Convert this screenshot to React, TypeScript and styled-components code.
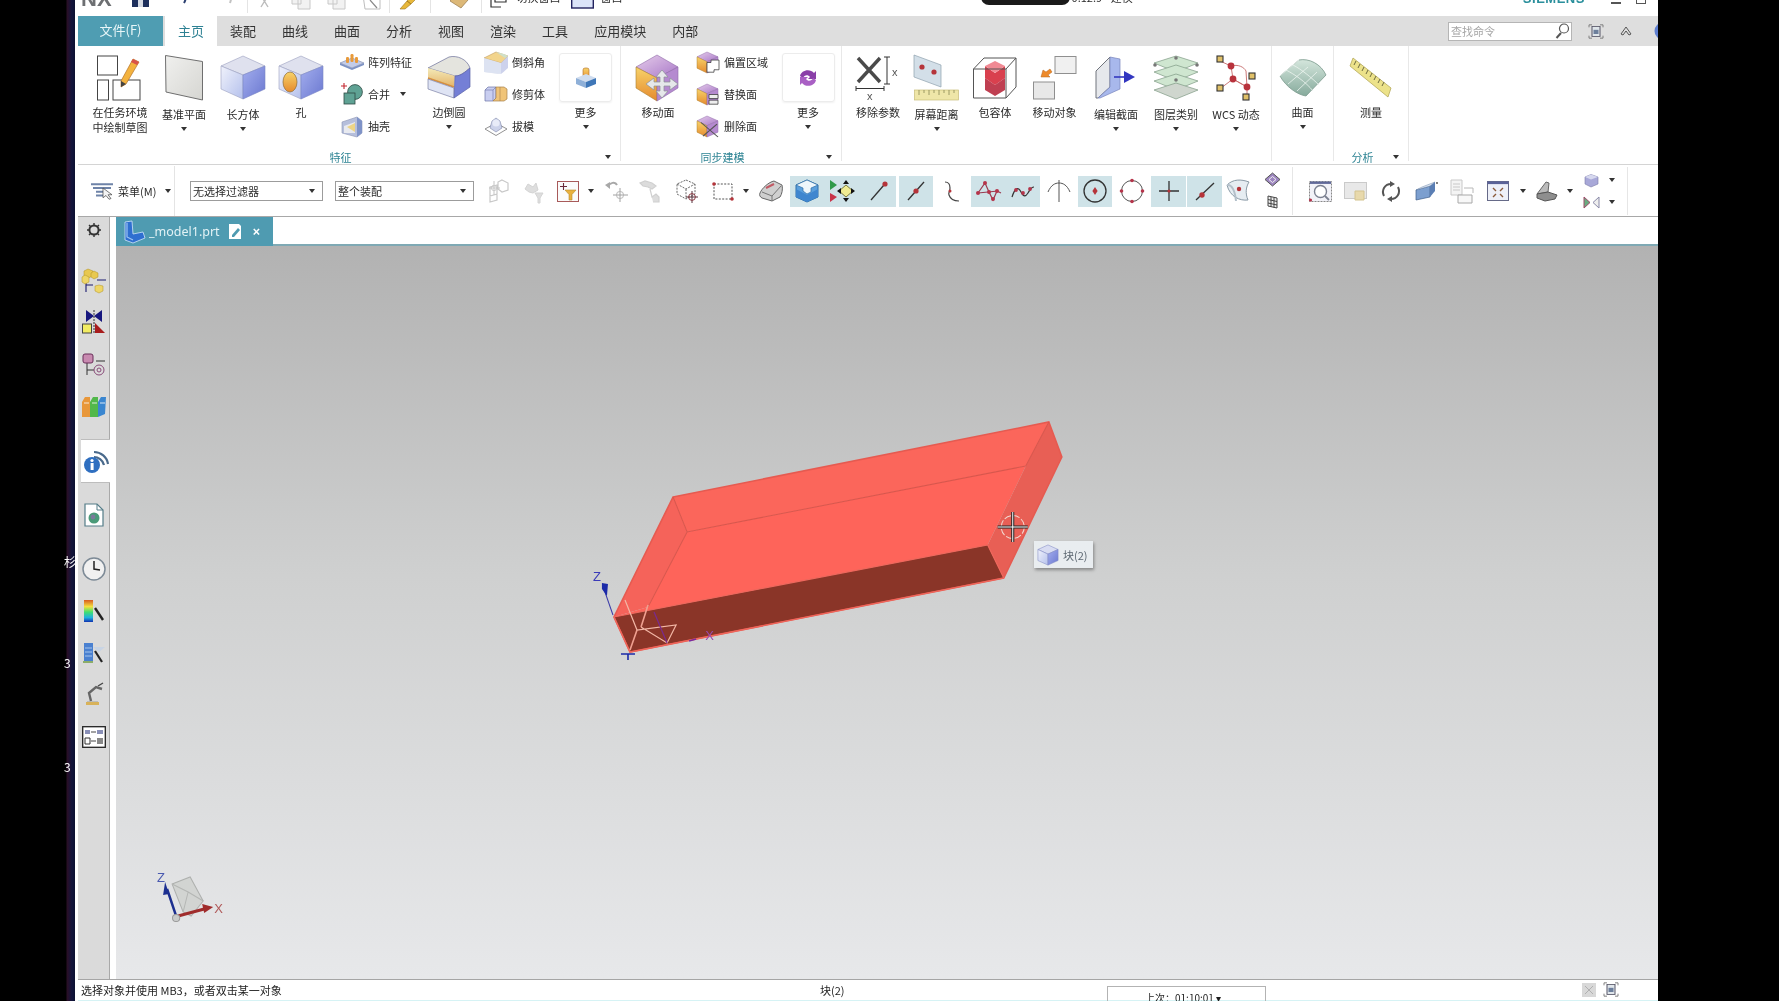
import React from "react";
import styled, { createGlobalStyle } from "styled-components";

const GlobalStyle = createGlobalStyle`
  html, body { margin: 0; padding: 0; background: #000; }
  body { font-family: "Noto Sans CJK SC", "Noto Sans", sans-serif; overflow: hidden; }
`;

const Page = styled.div`
  width: 1779px;
  height: 1001px;
  display: flex;
  background: #000;
  overflow: hidden;
  filter: blur(0.35px);
`;

const Gutter = styled.div`
  width: 75px;
  flex-shrink: 0;
  background: linear-gradient(90deg, #000 0, #000 66px, #2a0f26 67px, #12143c 72px, #0c1030 75px);
  display: flex;
  flex-direction: column;
  align-items: flex-end;
  color: #fff;
  font-size: 12px;
  line-height: 16px;
`;

const GutterMark = styled.span<{ $mt: number }>`
  margin-top: ${(p) => p.$mt}px;
  width: 11px;
  text-align: left;
`;

const Frame = styled.div`
  width: 1583px;
  flex-shrink: 0;
  box-sizing: border-box;
  padding-left: 3px;
  background: #fff;
  display: flex;
  flex-direction: column;
  overflow: hidden;
  color: #2b2b2b;
`;

const TitleBar = styled.div`
  height: 16px;
  flex-shrink: 0;
  display: flex;
  align-items: flex-end;
  overflow: hidden;
`;

const TitleItem = styled.div<{ $ml: number; $bottom?: number }>`
  margin-left: ${(p) => p.$ml}px;
  margin-bottom: ${(p) => p.$bottom ?? 0}px;
  flex-shrink: 0;
  display: flex;
  font-size: 11px;
  line-height: 15px;
  white-space: nowrap;
`;

const TitleDivider = styled.div<{ $ml: number }>`
  margin-left: ${(p) => p.$ml}px;
  width: 1px;
  height: 13px;
  margin-bottom: 3px;
  flex-shrink: 0;
  background: #e4e4e4;
`;

const NxMark = styled(TitleItem)`
  font-family: "Liberation Sans", sans-serif;
  font-weight: 700;
  font-size: 22px;
  line-height: 22px;
  color: #6d6f72;
`;

const TitlePill = styled.div`
  width: 89px;
  height: 14px;
  flex-shrink: 0;
  background: #1a1a1a;
  border-radius: 0 0 8px 8px;
`;

const Siemens = styled(TitleItem)`
  font-family: "Liberation Sans", sans-serif;
  font-weight: 700;
  font-size: 13px;
  letter-spacing: 0.5px;
  color: #2a8f9c;
`;

const WinBtn = styled.div<{ $ml: number; $kind: "min" | "max" }>`
  margin-left: ${(p) => p.$ml}px;
  margin-bottom: 12px;
  width: 10px;
  flex-shrink: 0;
  box-sizing: border-box;
  height: ${(p) => (p.$kind === "min" ? 2 : 10)}px;
  background: ${(p) => (p.$kind === "min" ? "#555" : "transparent")};
  border: ${(p) => (p.$kind === "max" ? "1px solid #555" : "none")};
`;

const TabRow = styled.div`
  height: 30px;
  flex-shrink: 0;
  display: flex;
  align-items: stretch;
  background: #dedede;
  font-size: 13px;
`;

const FileTab = styled.div`
  width: 85px;
  margin-right: 2px;
  padding-bottom: 3px;
  box-sizing: border-box;
  background: #4f9db2;
  color: #e8f6f8;
  display: flex;
  align-items: center;
  justify-content: center;
`;

const RibbonTab = styled.div<{ $active?: boolean }>`
  padding: 0 13px 1px;
  display: flex;
  align-items: center;
  background: ${(p) => (p.$active ? "#fff" : "transparent")};
  color: ${(p) => (p.$active ? "#2f8294" : "#333")};
  white-space: nowrap;
`;

const RowEnd = styled.div`
  margin-left: auto;
  display: flex;
  align-items: center;
  margin-right: -14px;
`;

const Spacer = styled.div<{ $w: number }>`
  width: ${(p) => p.$w}px;
  flex-shrink: 0;
`;

const SearchBox = styled.div`
  width: 124px;
  height: 19px;
  box-sizing: border-box;
  border: 1px solid #b5b5b5;
  background: #fff;
  display: flex;
  align-items: center;
  justify-content: space-between;
  padding: 0 2px;
  font-size: 11px;
  color: #a5a5a5;
`;

const Ribbon = styled.div`
  height: 119px;
  flex-shrink: 0;
  box-sizing: border-box;
  border-bottom: 1px solid #d4d4d4;
  display: flex;
  background: #fff;
`;

const RibbonGroup = styled.div<{ $w: number; $pad?: number }>`
  width: ${(p) => p.$w}px;
  box-sizing: border-box;
  padding-left: ${(p) => p.$pad ?? 0}px;
  border-right: 1px solid #e8e8e8;
  display: flex;
  flex-direction: column;
  margin-bottom: 3px;
`;

const GroupBody = styled.div`
  height: 104px;
  flex-shrink: 0;
  display: flex;
`;

const GroupFooter = styled.div<{ $pad: number }>`
  height: 14px;
  flex-shrink: 0;
  margin-left: ${(p) => -p.$pad}px;
  display: flex;
  align-items: center;
  padding-right: 7px;
  font-size: 11px;
  color: #2e8494;
`;

const FooterLabel = styled.span`
  flex: 1;
  text-align: center;
`;

const Arrow = styled.span`
  display: inline-block;
  flex-shrink: 0;
  width: 0;
  height: 0;
  border-left: 3px solid transparent;
  border-right: 3px solid transparent;
  border-top: 4px solid #333;
`;

const FooterArrow = styled(Arrow)`
  margin: 0 2px;
`;

const Command = styled.div<{ $w: number }>`
  width: ${(p) => p.$w}px;
  flex-shrink: 0;
  display: flex;
  flex-direction: column;
  align-items: center;
  padding-top: 4px;
  font-size: 11px;
  line-height: 15px;
`;

const CommandIcon = styled.div<{ $low?: boolean }>`
  height: ${(p) => (p.$low ? 57 : 55)}px;
  padding-bottom: ${(p) => (p.$low ? 2 : 0)}px;
  box-sizing: border-box;
  display: flex;
  align-items: center;
  justify-content: center;
`;

const CommandLabel = styled.div`
  text-align: center;
  white-space: nowrap;
  height: 15px;
`;

const CommandArrow = styled(Arrow)`
  margin-top: 5px;
`;

const MoreCard = styled.div`
  width: 53px;
  height: 49px;
  box-sizing: border-box;
  border: 1px solid #ececec;
  border-radius: 3px;
  box-shadow: 0 1px 2px rgba(0, 0, 0, 0.06);
  display: flex;
  align-items: center;
  justify-content: center;
`;

const SideColumn = styled.div<{ $w: number; $pad: number }>`
  width: ${(p) => p.$w}px;
  flex-shrink: 0;
  box-sizing: border-box;
  padding-left: ${(p) => p.$pad}px;
  display: flex;
  flex-direction: column;
  font-size: 11px;
`;

const SideRow = styled.div`
  height: 32px;
  display: flex;
  align-items: center;
  gap: 4px;
  white-space: nowrap;
`;

const SideIcon = styled.div`
  width: 24px;
  flex-shrink: 0;
  display: flex;
  justify-content: center;
`;

const SideArrow = styled(Arrow)`
  margin-left: 6px;
`;

const Toolbar = styled.div`
  height: 52px;
  flex-shrink: 0;
  box-sizing: border-box;
  padding-top: 1px;
  border-bottom: 1px solid #a8a8a8;
  display: flex;
  align-items: center;
  font-size: 11px;
`;

const MenuButton = styled.div`
  width: 97px;
  height: 100%;
  flex-shrink: 0;
  box-sizing: border-box;
  padding-left: 13px;
  border-right: 1px solid #e4e4e4;
  display: flex;
  align-items: center;
  gap: 3px;
`;

const FilterSelect = styled.div<{ $w: number; $ml: number }>`
  width: ${(p) => p.$w}px;
  margin-left: ${(p) => p.$ml}px;
  height: 20px;
  flex-shrink: 0;
  box-sizing: border-box;
  border: 1px solid #9c9c9c;
  display: flex;
  align-items: center;
  justify-content: space-between;
  padding: 0 7px 0 2px;
  white-space: nowrap;
`;

const Tool = styled.div<{ $w: number; $on?: boolean; $gap?: number }>`
  width: ${(p) => p.$w}px;
  height: 31px;
  flex-shrink: 0;
  display: flex;
  flex-direction: column;
  align-items: center;
  justify-content: center;
  gap: ${(p) => p.$gap ?? 9}px;
  background: ${(p) => (p.$on ? "#cfe3e8" : "transparent")};
`;

const ToolDivider = styled.div`
  width: 1px;
  height: 48px;
  margin: 0 1px 0 2px;
  flex-shrink: 0;
  background: #e6e6e6;
`;

const Main = styled.div`
  flex: 1;
  min-height: 0;
  display: flex;
`;

const Sidebar = styled.div`
  width: 32px;
  flex-shrink: 0;
  box-sizing: border-box;
  border-right: 1px solid #a9a9a9;
  background: #dadada;
  display: flex;
  flex-direction: column;
`;

const SideSlot = styled.div<{ $mt?: number; $h?: number; $active?: boolean }>`
  height: ${(p) => p.$h ?? 36}px;
  margin-top: ${(p) => p.$mt ?? 0}px;
  margin-left: ${(p) => (p.$active ? 3 : 0)}px;
  margin-right: ${(p) => (p.$active ? -1 : 0)}px;
  flex-shrink: 0;
  box-sizing: border-box;
  display: flex;
  align-items: center;
  justify-content: center;
  background: ${(p) => (p.$active ? "#fff" : "transparent")};
  border-top: ${(p) => (p.$active ? "1px solid #bdbdbd" : "none")};
  border-bottom: ${(p) => (p.$active ? "1px solid #bdbdbd" : "none")};
`;

const WorkArea = styled.div`
  flex: 1;
  margin-left: 6px;
  min-width: 0;
  display: flex;
  flex-direction: column;
`;

const DocStrip = styled.div`
  height: 29px;
  flex-shrink: 0;
  box-sizing: border-box;
  border-bottom: 2px solid #7fa9b4;
  display: flex;
  background: #fff;
`;

const DocTab = styled.div`
  width: 157px;
  height: 29px;
  flex-shrink: 0;
  box-sizing: border-box;
  padding-left: 6px;
  background: #4f9bb1;
  color: #e2f2f5;
  display: flex;
  align-items: center;
  font-family: "Noto Sans", sans-serif;
  font-size: 12.5px;
`;

const DocName = styled.span`
  margin: 0 8px 0 3px;
`;

const DocClose = styled.span`
  margin-left: 11px;
  font-weight: 700;
  font-family: "Liberation Sans", sans-serif;
  color: #fff;
`;

const Viewport = styled.div`
  position: relative;
  flex: 1;
  min-height: 0;
  background: linear-gradient(180deg, #b2b2b2 0%, #cfd0d0 45%, #e7e8ea 100%);
  overflow: hidden;
`;

const Scene = styled.svg`
  position: absolute;
  inset: 0;
  width: 100%;
  height: 100%;
`;

const SnapTip = styled.div`
  position: absolute;
  left: 918px;
  top: 295px;
  width: 59px;
  height: 27px;
  box-sizing: border-box;
  background: #e9edf0;
  box-shadow: 1px 2px 3px rgba(0, 0, 0, 0.35);
  display: flex;
  align-items: center;
  gap: 4px;
  padding-left: 3px;
  font-size: 11px;
  color: #5b6670;
`;

const StatusBar = styled.div`
  height: 22px;
  flex-shrink: 0;
  box-sizing: border-box;
  border-top: 1px solid #a5a5a5;
  border-bottom: 1px solid #d6f3f5;
  padding: 0 39px 0 3px;
  display: flex;
  align-items: center;
  font-size: 11px;
  color: #1d1d1d;
`;

const StatusPrompt = styled.div`
  width: 739px;
  flex-shrink: 0;
  white-space: nowrap;
`;

const StatusObject = styled.div`
  width: 287px;
  flex-shrink: 0;
`;

const StatusClock = styled.div`
  width: 159px;
  height: 15px;
  margin-top: 6px;
  box-sizing: border-box;
  border: 1px solid #b3b3b3;
  border-bottom: none;
  flex-shrink: 0;
  padding: 5px 0 0 37px;
  overflow: hidden;
  line-height: 12px;
  font-size: 10px;
  white-space: nowrap;
`;

const StatusIcons = styled.div`
  margin-left: auto;
  display: flex;
  gap: 6px;
`;

const IconSvg = styled.svg`
  display: block;
  flex-shrink: 0;
  overflow: visible;
`;

const HiddenDefs = styled.svg`
  position: absolute;
  width: 0;
  height: 0;
`;

// rh squeezes a drawing to a rendered height other than its own box
type IP = { w: number; h: number; rh?: number; children: React.ReactNode };
const I = ({ w, h, rh, children }: IP) => (
  <IconSvg width={w} height={rh ?? h} viewBox={`0 0 ${w} ${h}`} preserveAspectRatio="none">
    {children}
  </IconSvg>
);

const Defs = () => (
  <HiddenDefs>
    <defs>
      <linearGradient id="cl" x1="0" y1="0" x2="1" y2="1">
        <stop offset="0" stopColor="#f0f2fb" />
        <stop offset="1" stopColor="#b4c0ec" />
      </linearGradient>
      <linearGradient id="cr" x1="0" y1="0" x2="1" y2="1">
        <stop offset="0" stopColor="#a3aeee" />
        <stop offset="1" stopColor="#6b78d0" />
      </linearGradient>
      <linearGradient id="org" x1="0" y1="0" x2="0" y2="1">
        <stop offset="0" stopColor="#f7d36a" />
        <stop offset="1" stopColor="#e58a2e" />
      </linearGradient>
      <linearGradient id="band" x1="0" y1="0" x2="0" y2="1">
        <stop offset="0" stopColor="#f4eab8" />
        <stop offset="1" stopColor="#e4b46a" />
      </linearGradient>
      <linearGradient id="pur" x1="0" y1="0" x2="1" y2="1">
        <stop offset="0" stopColor="#e6cdea" />
        <stop offset="1" stopColor="#a878c8" />
      </linearGradient>
      <linearGradient id="rain" x1="0" y1="0" x2="0" y2="1">
        <stop offset="0" stopColor="#d85a20" />
        <stop offset="0.3" stopColor="#f5e040" />
        <stop offset="0.55" stopColor="#40e070" />
        <stop offset="0.8" stopColor="#20b0e0" />
        <stop offset="1" stopColor="#1030b0" />
      </linearGradient>
      <linearGradient id="dat" x1="0" y1="0" x2="1" y2="1">
        <stop offset="0" stopColor="#f0f0ee" />
        <stop offset="1" stopColor="#d6d6d2" />
      </linearGradient>
      <linearGradient id="sf" x1="0" y1="0" x2="0" y2="1">
        <stop offset="0" stopColor="#d4e6dc" />
        <stop offset="1" stopColor="#86aa9c" />
      </linearGradient>
    </defs>
  </HiddenDefs>
);

const Sketch = () => (
  <I w={46} h={46}>
    <g fill="#fff" stroke="#444" strokeWidth="1">
      <rect x="0.5" y="1" width="20" height="19" />
      <rect x="0.5" y="25" width="11" height="20" />
      <rect x="16" y="25" width="27" height="20" />
    </g>
    <path d="M36 4l6 3-13 22-5 3 0-6z" fill="#f3b23e" stroke="#b5722a" strokeWidth="0.7" />
    <path d="M36 4l6 3-2 3-6-3z" fill="#d8534a" />
    <path d="M24 32l0-6 5 3z" fill="#444" />
  </I>
);
const Datum = () => (
  <I w={38} h={46}>
    <path d="M0.5 0.5L37.5 6.5V45L1 37z" fill="url(#dat)" stroke="#6f6f6f" />
  </I>
);
const BlockBig = ({ hole }: { hole?: boolean }) => (
  <I w={44} h={43}>
    <path d="M22 0l22 10-22 9L0 10z" fill="#dfe1ee" stroke="#9aa0c0" strokeWidth="0.6" />
    <path d="M0 10l22 9v24L0 33z" fill="url(#cl)" stroke="#9aa0c0" strokeWidth="0.6" />
    <path d="M44 10L22 19v24l22-10z" fill="url(#cr)" stroke="#7b86c4" strokeWidth="0.6" />
    {hole && <ellipse cx="11" cy="26" rx="7" ry="10" fill="url(#org)" stroke="#8c6a33" strokeWidth="0.7" />}
  </I>
);
const Blend = () => (
  <I w={44} h={43}>
    <path d="M1 12L22 1C30-1 40 3 43 12 38 16 34 20 28 20Z" fill="#e4e4de" stroke="#6a6f98" strokeWidth="0.7" />
    <path d="M1 12l27 8-1 11-26-9z" fill="url(#band)" />
    <path d="M1 22l26 9" stroke="#d8903e" strokeWidth="1.6" />
    <path d="M1 23l26 9v10L1 33z" fill="#dfe4f4" stroke="#6a6f98" strokeWidth="0.6" />
    <path d="M28 20c6 0 10-4 15-8v19L27 42z" fill="#747fd6" stroke="#5a62a8" strokeWidth="0.7" />
  </I>
);
const PatternI = () => (
  <I w={24} h={16}>
    <path d="M0 9l12-5 12 5-12 5z" fill="#c3cce8" stroke="#7d88a8" strokeWidth="0.6" />
    <path d="M0 9v2l12 5 12-5V9l-12 5z" fill="#7e93c4" />
    <g fill="#e89a3a">
      <rect x="6" y="3" width="3" height="6" rx="1.2" />
      <rect x="10.5" y="0" width="3" height="8" rx="1.2" />
      <rect x="15" y="3" width="3" height="6" rx="1.2" />
    </g>
  </I>
);
const Unite = () => (
  <I w={22} h={22}>
    <path d="M0 3h6M3 0v6" stroke="#c3262f" strokeWidth="1.1" />
    <circle cx="14" cy="9" r="7.4" fill="#5fa294" stroke="#2f4a44" strokeWidth="0.8" />
    <rect x="3" y="10" width="11" height="11" fill="#5fa294" stroke="#2f4a44" strokeWidth="0.8" />
  </I>
);
const Shell = () => (
  <I w={22} h={21}>
    <path d="M1 6l15-5 5 4v12l-5 4L1 17z" fill="#b6bfdc" stroke="#8c94b4" strokeWidth="0.6" />
    <path d="M3 10l11-4v11l-11 0z" fill="#e8eaf0" />
    <path d="M6 11l8-4v9z" fill="#edd486" />
    <path d="M16 1l5 4v12l-5 4z" fill="#7f93c8" />
  </I>
);
const Chamfer = () => (
  <I w={24} h={24}>
    <path d="M0 8l12-6 12 4-4 16-6 2-14-2z" fill="#e6e8f2" />
    <path d="M0 8l12-6 12 4-7 7z" fill="#f2d48c" stroke="#c8a060" strokeWidth="0.6" />
    <path d="M17 13l7-7v12l-7 6z" fill="#cdd2ec" />
    <path d="M0 8l17 5v11L0 22z" fill="#dde3f2" />
    <path d="M12 2l8 2 4 2-3 2z" fill="#cfe0c8" />
  </I>
);
const Trim = () => (
  <I w={24} h={16}>
    <path d="M1 4l3-3h8v11l-3 3H1z" fill="#c9cef0" stroke="#6c74a8" strokeWidth="0.7" />
    <path d="M1 4h8v11M9 4l3-3" fill="none" stroke="#6c74a8" strokeWidth="0.6" />
    <path d="M12 1h8l3 2v10l-3 2h-8l-3 0 3-3z" fill="#f0c478" stroke="#a8824a" strokeWidth="0.7" />
    <path d="M16 1v14" stroke="#a8824a" strokeWidth="0.6" />
  </I>
);
const Draft = () => (
  <I w={22} h={19}>
    <path d="M0 12L11 6l11 6-11 6.5z" fill="#fff" stroke="#777" strokeWidth="0.8" />
    <path d="M5 11l2-7 4-3 4 3 2 7-6 4z" fill="#ccd2ea" stroke="#7e86a8" strokeWidth="0.6" />
    <circle cx="11" cy="6" r="3.6" fill="#e8ebf8" />
  </I>
);
const MoreFeature = () => (
  <I w={22} h={20}>
    <rect x="8" y="0" width="6" height="11" rx="2" fill="url(#org)" stroke="#b06a22" strokeWidth="0.6" />
    <path d="M1 10l10-4 10 4-10 4z" fill="#cfdcee" />
    <path d="M1 10v6l10 4v-6z" fill="#8fb0d8" />
    <path d="M21 10v6l-10 4v-6z" fill="#3f77b8" />
  </I>
);
const MoveFace = () => (
  <I w={46} h={46}>
    <path d="M22 0l21 12-21 11L1 12z" fill="url(#pur)" stroke="#8f6aa8" strokeWidth="0.6" />
    <path d="M1 12l21 11v23L1 33z" fill="url(#org)" stroke="#a88030" strokeWidth="0.6" />
    <path d="M43 12L22 23v23l21-13z" fill="#b58ad0" stroke="#8f6aa8" strokeWidth="0.6" />
    <path d="M27 15l6 7h-4v5h6v-4l8 6-8 6v-4h-6v5h4l-6 7-6-7h4v-5h-6v4l-8-6 8-6v4h6v-5h-4z" fill="#e6e8ea" stroke="#8a8f96" strokeWidth="0.7" />
  </I>
);
const FaceSmall = ({ kind }: { kind: "offset" | "replace" | "del" }) => (
  <I w={22} h={26} rh={21}>
    <path d="M10 0l11 6-11 6L0 6z" fill="url(#pur)" stroke="#8f6aa8" strokeWidth="0.5" />
    <path d="M0 6l10 6v14L0 20z" fill="url(#org)" stroke="#a88030" strokeWidth="0.5" />
    <path d="M21 6l-11 6v14l11-6z" fill="#b58ad0" stroke="#8f6aa8" strokeWidth="0.5" />
    {kind === "offset" && <path d="M10 13h4v-3h8v12h-5v3h-7z" fill="#fff" stroke="#333" strokeWidth="0.8" />}
    {kind === "replace" && <path d="M12 13h9v5h-9zM12 20h9v5h-9z" fill="#eee" stroke="#333" strokeWidth="0.8" />}
    {kind === "del" && <path d="M4 8l17 18M20 10L6 25" stroke="#555" strokeWidth="1.2" />}
  </I>
);
const SyncMore = () => (
  <I w={22} h={22}>
    <path d="M3 9c1-6 10-8 14-3l2-2v8h-8l2-2c-2-3-6-2-7 1z" fill="#8a3fa8" />
    <path d="M19 13c-1 6-10 8-14 3l-2 2v-8h8l-2 2c2 3 6 2 7-1z" fill="#a960c4" />
  </I>
);
const RemoveParam = () => (
  <I w={44} h={44}>
    <path d="M2 2l22 24M24 2L2 26" stroke="#4a4a4a" strokeWidth="3.4" />
    <path d="M28 1h6M31 1v27M28 28h6M0 30v5M0 32.5h28M28 30v5" stroke="#333" strokeWidth="1" fill="none" />
    <text x="36" y="20" fontFamily="Liberation Sans" fontSize="11" fill="#555">x</text>
    <text x="11" y="44" fontFamily="Liberation Sans" fontSize="11" fill="#555">x</text>
  </I>
);
const ScreenDist = () => (
  <I w={45} h={46}>
    <path d="M0 0l27 10v22L0 22z" fill="#d3dfe8" stroke="#8ea0ae" strokeWidth="0.7" />
    <circle cx="8" cy="12" r="2.6" fill="#b5343a" />
    <circle cx="20" cy="17" r="2.6" fill="#b5343a" />
    <rect x="0.5" y="35" width="44" height="10" fill="#efe6a8" stroke="#c8bd78" strokeWidth="0.7" />
    <path d="M5 35v5M10 35v3M15 35v5M20 35v3M25 35v5M30 35v3M35 35v5M40 35v3" stroke="#7d7848" strokeWidth="0.7" />
  </I>
);
const Envelope = () => (
  <I w={44} h={42}>
    <path d="M12 9L22 16l0 12-10-7zM22 16l10-7v12l-10 7z" fill="#d9404e" />
    <path d="M12 9l10-5 10 5-10 7z" fill="#f08a94" />
    <path d="M12 21l10 7 10-7V33l-10 6-10-6z" fill="#b82a3e" opacity="0.9" />
    <path d="M0.5 12L11 1h32v29L33 41H0.5zM0.5 12H33v29M33 12L43 1" fill="none" stroke="#555" strokeWidth="1" />
  </I>
);
const MoveObject = () => (
  <I w={44} h={44}>
    <rect x="22" y="0.5" width="21" height="17" fill="#f0f0f0" stroke="#8f8f8f" />
    <rect x="0.5" y="26" width="21" height="17" fill="#e8e8e8" stroke="#8f8f8f" />
    <path d="M8 21l2-7 3 2 4-3 2 3-4 3 2 2z" fill="#ee8a2a" stroke="#b5651a" strokeWidth="0.5" />
  </I>
);
const EditSection = () => (
  <I w={40} h={42}>
    <path d="M0 14L14 0v30L2 41H0z" fill="#e6e8ec" stroke="#70747c" />
    <path d="M14 0l10 2v30L4 41 2 41 14 30z" fill="#a8b8ec" stroke="#7884bc" strokeWidth="0.7" />
    <path d="M18 20h12" stroke="#3337c0" strokeWidth="1.6" />
    <path d="M28 14l11 6-11 6z" fill="#3337c0" />
  </I>
);
const LayerI = () => (
  <I w={46} h={44}>
    {[0, 9, 18, 27].map((d) => (
      <path key={d} d={`M23 ${d}l22 7-22 9L1 ${d + 7}z`} fill={d === 27 ? "#cfd6ce" : "#cfe6d0"} stroke="#7e9a84" strokeWidth="0.7" />
    ))}
    <g fill="#777">
      <circle cx="23" cy="2" r="1.8" />
      <circle cx="44" cy="9" r="1.8" />
      <circle cx="2" cy="9" r="1.8" />
      <circle cx="23" cy="24" r="1.8" />
    </g>
  </I>
);
const Wcs = () => (
  <I w={40} h={46}>
    <path d="M4 6L15 11 17 24 31 32 30 16C28 12 22 9 15 11M5 33l12-9M17 24l14 8M31 32l0 9" fill="none" stroke="#c56a6a" strokeWidth="0.9" />
    <g fill="#b8323c">
      <circle cx="15" cy="11" r="3.4" />
      <circle cx="17" cy="24" r="3.4" />
      <circle cx="31" cy="32" r="3.4" />
    </g>
    <g fill="#e0c068" stroke="#333" strokeWidth="1.1">
      <rect x="1" y="1" width="6" height="6" />
      <rect x="33" y="18" width="6" height="6" />
      <rect x="1" y="30" width="6" height="6" />
      <rect x="27" y="39" width="6" height="6" />
    </g>
  </I>
);
const SurfaceI = () => (
  <I w={46} h={38}>
    <path d="M0 17L19 1c10-2 22 4 27 15L26 37C18 36 6 28 0 17z" fill="url(#sf)" stroke="#7c9a8e" strokeWidth="0.8" />
    <path d="M6 11c8 4 20 12 27 21M13 6c8 4 19 13 26 20M0 17L19 1M8 25L28 8M17 32L37 13" fill="none" stroke="#eef5f0" strokeWidth="0.8" />
  </I>
);
const MeasureI = () => (
  <I w={42} h={40}>
    <path d="M3 0L41 30l-3 9L0 8z" fill="#ece28a" stroke="#b5a95c" strokeWidth="0.8" />
    <path d="M6 3l-2 4M10 6l-2 4M14 9l-2 4M18 12l-2 4M22 15l-2 4M26 18l-2 4M30 21l-2 4M34 24l-2 4" stroke="#6d6a40" strokeWidth="1" />
  </I>
);

const MagnifierI = () => (
  <I w={14} h={16}>
    <circle cx="9" cy="5.5" r="4.5" fill="#fff" stroke="#555" strokeWidth="1.2" />
    <path d="M6 10L1.5 15" stroke="#555" strokeWidth="2" />
  </I>
);
const FitFrame = () => (
  <I w={16} h={18} rh={15}>
    <path d="M1 4V1h3M12 1h3v3M15 14v3h-3M4 17H1v-3" fill="none" stroke="#777" />
    <rect x="4" y="3" width="8" height="12" fill="#dfe5ea" stroke="#556" />
    <rect x="5.5" y="7" width="5" height="5" fill="#6c7f9c" />
  </I>
);
const ChevronUp = () => (
  <I w={14} h={12}>
    <path d="M2 9l5-7 5 7-2 1-3-4-3 4z" fill="none" stroke="#555" />
  </I>
);
const HelpI = () => (
  <I w={18} h={18}>
    <circle cx="9" cy="9" r="8.5" fill="#5f7fd0" />
    <text x="5.5" y="13" fontSize="12" fill="#fff" fontFamily="Liberation Sans">?</text>
  </I>
);
const MenuI = () => (
  <I w={24} h={24} rh={18}>
    <path d="M0 3h22M2 8h18M5 13h9M5 18h7" stroke="#6e83a8" strokeWidth="2.6" />
    <path d="M12 8l0 13 3-3 3 5 2-1-3-5h4z" fill="#f4f4f4" stroke="#444" strokeWidth="0.8" />
  </I>
);

/* ---- toolbar glyphs ---- */
const SnapGhost = () => (
  <I w={24} h={26}>
    <path d="M3 9l7-2v9l-7 2zM3 18v6l7-2v-6M15 2l6 3v7l-6 2-4-3V4z" fill="none" stroke="#c8c8c8" strokeWidth="1.2" />
    <path d="M7 3v14M2 10h11" stroke="#c4c4c4" />
    <circle cx="7" cy="10" r="2.6" fill="none" stroke="#cbcbcb" />
  </I>
);
const Ghost2 = () => (
  <I w={22} h={24}>
    <path d="M2 10l3-5 5 3 3-4 2 7-5 3-4-1zM12 14h8l-3 5v5h-2v-5z" fill="#dedede" stroke="#d4d4d4" />
  </I>
);
const FilterI = () => (
  <I w={22} h={21}>
    <rect x="0.5" y="0.5" width="21" height="20" fill="#fbfbfb" stroke="#a85a5a" />
    <path d="M3 5.5h7M6.5 2v7" stroke="#6a2a3a" strokeWidth="1.1" />
    <path d="M8 9h11l-4 4.5V19h-3v-5.5z" fill="#e9b13e" stroke="#b88a2e" strokeWidth="0.6" />
  </I>
);
const ArrowCross = () => (
  <I w={23} h={22}>
    <path d="M3 6c2-3 7-5 9-1" fill="none" stroke="#a8a8a8" strokeWidth="2" />
    <path d="M0 5l5-3 0 7z" fill="#a8a8a8" />
    <path d="M15 8v14M8 15h15" stroke="#a0a0a0" />
    <circle cx="15" cy="15" r="3.6" fill="none" stroke="#b8b8b8" />
  </I>
);
const Ghost3 = () => (
  <I w={23} h={24}>
    <path d="M1 4l5-2 7 2 4 3-4 3-4-2-5-1zM11 10l2 8 4-3 3 3v5h-6" fill="#dcdcdc" stroke="#d0d0d0" strokeWidth="1.2" />
  </I>
);
const BoxCross = () => (
  <I w={24} h={24}>
    <path d="M10 1l9 4v10l-9 5-9-5V5zM1 5l9 5 9-5M10 10v10" fill="none" stroke="#6a6a6a" strokeDasharray="2 1.2" />
    <path d="M16 12v12M10 18h12" stroke="#55303a" />
    <circle cx="16" cy="18" r="3.4" fill="none" stroke="#8a3a44" />
  </I>
);
const RectSel = () => (
  <I w={22} h={19}>
    <path d="M2 2h18v15H2z" fill="none" stroke="#555" strokeDasharray="2 1.4" />
    <circle cx="2" cy="2" r="1.8" fill="#b5343a" />
    <circle cx="20" cy="17" r="1.8" fill="#b5343a" />
  </I>
);
const Block3 = () => (
  <I w={24} h={22}>
    <path d="M1 13C3 8 10 2 15 1l8 4c1 4 0 9-2 12l-8 4-10-3c-2-1-3-3-2-5z" fill="#cfcfcf" stroke="#666" />
    <path d="M3 12l10 4 9-10M13 16v5" fill="none" stroke="#777" />
    <path d="M7 8l8-4" stroke="#c25a64" strokeWidth="2" />
  </I>
);
const BlueCube = () => (
  <I w={23} h={22}>
    <path d="M11 0l11 5v12l-11 5L0 17V5z" fill="#5b9fdc" stroke="#2f6fa8" />
    <path d="M0 5l11-5 11 5-7 3v4l-4 2-4-3V8z" fill="#eef6fb" stroke="#2f6fa8" strokeWidth="0.7" />
    <path d="M0 9l11 6 11-6v8l-11 5L0 17z" fill="#3f86cf" />
  </I>
);
const MoveArrows = () => (
  <I w={26} h={24}>
    <path d="M16 6l7 6-7 6-7-6z" fill="#f0ec92" stroke="#7b7b3e" />
    <path d="M16 1l3 4h-6zM16 23l3-4h-6zM25 12l-4 3V9zM7 12l4 3V9z" fill="#111" />
    <path d="M0 1l7 5-7 5z" fill="#2f9a4a" />
    <path d="M0 14l7 4-7 5z" fill="#c8344a" />
  </I>
);
const EndLine = () => (
  <I w={20} h={20}>
    <path d="M2 19L15 4" stroke="#333" strokeWidth="1.3" />
    <circle cx="16" cy="3" r="2.6" fill="#b5343a" />
  </I>
);
const MidLine = () => (
  <I w={20} h={20}>
    <path d="M2 19L18 1" stroke="#333" strokeWidth="1.3" />
    <circle cx="10" cy="10" r="2.6" fill="#b5343a" />
  </I>
);
const CurveI = () => (
  <I w={20} h={21}>
    <path d="M3 1c3 0 5 2 5 6s-2 4-1 7 4 6 10 6" fill="none" stroke="#444" strokeWidth="1.2" />
    <circle cx="8" cy="10" r="1.5" fill="#b5343a" />
  </I>
);
const PolyPts = () => (
  <I w={26} h={20}>
    <path d="M2 12L9 2l4 9 4 8 4-9 4 2M2 12l20-2" fill="none" stroke="#9a3a50" strokeWidth="1.2" />
    <g fill="#b5344a">
      <circle cx="9" cy="2" r="2" />
      <circle cx="2" cy="12" r="2" />
      <circle cx="13" cy="11" r="2" />
      <circle cx="17" cy="18" r="2" />
      <circle cx="21" cy="10" r="2" />
    </g>
  </I>
);
const Spline = () => (
  <I w={24} h={13}>
    <path d="M1 12C4 3 7 1 10 7s5 4 7 1 3-6 6-6" fill="none" stroke="#333" strokeWidth="1.2" />
    <g fill="#b5344a">
      <circle cx="5" cy="5" r="1.9" />
      <circle cx="12" cy="8" r="1.9" />
      <circle cx="19" cy="4" r="1.9" />
    </g>
  </I>
);
const ArcCross = () => (
  <I w={24} h={22}>
    <path d="M1 12C4 5 8 3 12 3s8 2 11 9M12 0v22" fill="none" stroke="#555" />
  </I>
);
const CircleDot = () => (
  <I w={24} h={24}>
    <circle cx="12" cy="12" r="11" fill="none" stroke="#333" strokeWidth="1.3" />
    <path d="M12 8l2.6 4-2.6 4-2.6-4z" fill="#b5343a" />
  </I>
);
const CircleRing = () => (
  <I w={24} h={24}>
    <circle cx="12" cy="12" r="10.5" fill="none" stroke="#555" />
    <g fill="#b5344a">
      <circle cx="12" cy="1.5" r="1.8" />
      <circle cx="12" cy="22.5" r="1.8" />
      <circle cx="1.5" cy="12" r="1.8" />
      <circle cx="22.5" cy="12" r="1.8" />
    </g>
  </I>
);
const Cross = () => (
  <I w={20} h={20}>
    <path d="M10 0v20M0 10h20" stroke="#333" strokeWidth="1.3" />
    <circle cx="10" cy="10" r="1.6" fill="#b5343a" />
  </I>
);
const SlashPt = () => (
  <I w={20} h={19}>
    <path d="M1 18L19 1" stroke="#333" strokeWidth="1.3" />
    <circle cx="7" cy="13" r="2.7" fill="#b5343a" />
  </I>
);
const FacePt = () => (
  <I w={24} h={22}>
    <path d="M1 5C7-1 15-1 23 2c-3 5-4 11-1 18-8 1-18-3-21-15z" fill="#e6edf2" stroke="#8a9aa6" />
    <path d="M1 5c5-1 8 6 9 16" fill="none" stroke="#b4c0ca" strokeWidth="2" />
    <circle cx="13" cy="9" r="2.2" fill="#b5343a" />
  </I>
);
const Diamond = () => (
  <I w={15} h={13}>
    <path d="M7.5 0L15 6.5 7.5 13 0 6.5z" fill="#9d86c0" stroke="#555" />
    <path d="M4 6.5l3.5-3 3.5 3-3.5 3z" fill="none" stroke="#eee" />
  </I>
);
const GridI = () => (
  <I w={11} h={14}>
    <path d="M1 1l9 2v10l-9-2zM1 4.5l9 2M1 8l9 2M4 2v10M7 2.5v10" fill="#eee" stroke="#444" />
  </I>
);
const ZoomFrame = () => (
  <I w={23} h={21}>
    <rect x="0.5" y="0.5" width="22" height="20" fill="#f2f2f8" stroke="#888" strokeDasharray="2 1" />
    <rect x="1" y="0.5" width="21" height="2.4" fill="#5f6898" />
    <circle cx="11.5" cy="10.5" r="6" fill="#fff" stroke="#7b8090" strokeWidth="1.4" />
    <path d="M16 15l4 4" stroke="#7b8090" strokeWidth="1.8" />
    <circle cx="1.5" cy="19" r="1.6" fill="#b5344a" />
  </I>
);
const PasteGhost = () => (
  <I w={23} h={19}>
    <rect x="0.5" y="0.5" width="22" height="16" fill="#e8e8e8" stroke="#cacaca" />
    <path d="M11 9h9v9h-9z" fill="#e8d9ac" stroke="#d4c490" />
  </I>
);
const Rotate = () => (
  <I w={22} h={21}>
    <path d="M4 15C1 9 5 3 11 3M18 6c3 6-1 12-7 12" fill="none" stroke="#555" strokeWidth="2" />
    <path d="M10 0l5 3-5 3zM12 21l-5-3 5-3z" fill="#555" />
  </I>
);
const Wedge = () => (
  <I w={22} h={18}>
    <path d="M0 8l14-4v11L0 18z" fill="#7c9fcf" stroke="#3f5f8a" strokeWidth="0.7" />
    <path d="M0 8l14-4 5-4-13 5z" fill="#dfe7f2" stroke="#6a84a8" strokeWidth="0.5" />
    <path d="M14 4l5-4v9l-5 6z" fill="#5a7eb4" />
    <circle cx="21" cy="1" r="0.9" fill="#444" />
  </I>
);
const DocsGhost = () => (
  <I w={25} h={23}>
    <path d="M1 0h11v15H1zM3 4h7M3 7h7M3 10h7" fill="#f4f4f4" stroke="#c8c8c8" />
    <path d="M8 15h14v8H8z" fill="#f8f8f8" stroke="#a8a8a8" />
    <path d="M14 8h9v5" fill="none" stroke="#b8b8b8" />
  </I>
);
const FitAll = () => (
  <I w={22} h={20}>
    <rect x="0.5" y="0.5" width="21" height="19" fill="#eef0f8" stroke="#666a88" />
    <rect x="0.5" y="0.5" width="21" height="2.6" fill="#5a6298" />
    <path d="M6 7l3 3M16 7l-3 3M6 16l3-3M16 16l-3-3" stroke="#8a5a3a" strokeWidth="1.4" />
  </I>
);
const Shade = () => (
  <I w={22} h={20}>
    <path d="M1 13L10 1l3 1-1 9z" fill="#bbb" stroke="#666" />
    <path d="M1 13l11-2 9 3-2 4-10 2-8-3z" fill="#8e8e8e" stroke="#555" />
  </I>
);
const Cyl = () => (
  <I w={15} h={13}>
    <path d="M1 3l6-2.5 7 2.5v7l-7 3-6-3z" fill="#a8a8d8" stroke="#7a7aa8" strokeWidth="0.6" />
    <path d="M1 3l6-2.5 7 2.5-7 2.6z" fill="#d6d8ee" />
  </I>
);
const Mirror = () => (
  <I w={17} h={13}>
    <path d="M1 1l6 5.5L1 12z" fill="#6aaa80" stroke="#a04a6a" />
    <path d="M16 1l-6 5.5 6 5.5z" fill="#eee" stroke="#8a8aa8" />
  </I>
);
const LBlock = () => (
  <I w={24} h={24}>
    <path d="M3 2l7-1 1 13 10-2 2 6-12 5-8-3z" fill="#2f6fd0" stroke="#cfe4fa" strokeWidth="0.8" />
    <path d="M5 3v14l6 3" fill="none" stroke="#9cc4f2" strokeWidth="1.2" />
  </I>
);
const DocPen = () => (
  <I w={14} h={17}>
    <path d="M1 1h10l2 2v13H1z" fill="#fff" />
    <path d="M4 12l6-7 2 2-6 7H4z" fill="#4f9bb1" />
  </I>
);
const SmallCube = ({ s = 24 }: { s?: number }) => (
  <I w={s} h={s}>
    <g transform={`scale(${s / 24})`}>
      <path d="M12 1l11 5-11 5L1 6z" fill="#d8dcf2" stroke="#8089c4" strokeWidth="0.6" />
      <path d="M1 6l11 5v12L1 18z" fill="url(#cl)" stroke="#8089c4" strokeWidth="0.6" />
      <path d="M23 6l-11 5v12l11-5z" fill="url(#cr)" stroke="#8089c4" strokeWidth="0.6" />
    </g>
  </I>
);

/* ---- resource bar glyphs ---- */
const Gear = () => (
  <I w={14} h={14}>
    <circle cx="7" cy="7" r="4.6" fill="none" stroke="#333" strokeWidth="2" />
    <path d="M7 0v2.5M7 11.5V14M0 7h2.5M11.5 7H14M2 2l1.8 1.8M10.2 10.2L12 12M12 2l-1.8 1.8M3.8 10.2L2 12" stroke="#333" strokeWidth="1.4" />
  </I>
);
const AsmNav = () => (
  <I w={24} h={26}>
    <path d="M4 13v12M4 18h7M15 13h9" stroke="#1a1a70" strokeWidth="1.1" />
    <path d="M6 2l5 2v5l-5 2-4-2V4z" fill="#e8c850" stroke="#b09020" strokeWidth="0.5" />
    <path d="M3 8l4 2v5l-4 2-3-2v-5z" fill="#eed668" stroke="#b09020" strokeWidth="0.5" />
    <path d="M12 4l4 2v4l-4 2-3-2V6z" fill="#e8c850" stroke="#b09020" strokeWidth="0.5" />
    <path d="M17 18l4 1v5l-4 2-4-2v-5z" fill="#eed668" stroke="#b09020" strokeWidth="0.5" />
  </I>
);
const ConstraintNav = () => (
  <I w={24} h={24}>
    <path d="M4 0l8 6 8-6v12l-8-6-8 6z" fill="#16167e" />
    <path d="M12 0v24" stroke="#333" strokeDasharray="2 1" />
    <rect x="0.5" y="14" width="9" height="9" fill="#f2ec62" stroke="#444" />
    <path d="M13 13l10 10H13z" fill="#a81c1c" />
  </I>
);
const PartNav = () => (
  <I w={24} h={24}>
    <path d="M5 10v12M5 17h7M14 8h9" stroke="#333" strokeWidth="1" />
    <rect x="1" y="1" width="10" height="9" rx="2" fill="#c88ab0" stroke="#6a2e5a" />
    <circle cx="17" cy="17" r="5" fill="none" stroke="#884a78" />
    <circle cx="17" cy="17" r="2" fill="none" stroke="#884a78" />
  </I>
);
const Books = () => (
  <I w={24} h={24}>
    <path d="M0 7l3-5h5v20H0z" fill="#e8973a" />
    <path d="M8 7l3-5h5v20H8z" fill="#52b84a" />
    <path d="M16 7l3-5h5l-1 17-7 3z" fill="#3a86d0" />
    <path d="M2 8h5M10 8h5M18 8h5" stroke="#fff" strokeWidth="0.8" />
  </I>
);
const InfoFeed = () => (
  <I w={26} h={24}>
    <path d="M11 3c7 0 13 5 14 12M11 8c4 0 9 3 10 8" fill="none" stroke="#4a6a8c" strokeWidth="2.2" />
    <circle cx="9" cy="16" r="8" fill="#2f6fc0" />
    <circle cx="9" cy="11.5" r="1.6" fill="#fff" />
    <rect x="7.6" y="14" width="3" height="7" fill="#fff" />
  </I>
);
const WebDoc = () => (
  <I w={20} h={24}>
    <path d="M1 1h12l6 6v16H1z" fill="#fff" stroke="#547c88" strokeWidth="1.2" />
    <path d="M13 1v6h6" fill="none" stroke="#547c88" />
    <circle cx="10" cy="15" r="5.5" fill="#4a9a78" />
    <circle cx="9" cy="14" r="2.4" fill="#7a7a9a" />
  </I>
);
const ClockI = () => (
  <I w={24} h={24}>
    <circle cx="12" cy="12" r="11" fill="#f1f1f1" stroke="#7d8a96" strokeWidth="1.5" />
    <path d="M12 4v8l6 1" fill="none" stroke="#222" strokeWidth="1.5" />
  </I>
);
const RainbowI = () => (
  <I w={22} h={24}>
    <rect x="1" y="1" width="9" height="22" fill="url(#rain)" />
    <path d="M12 9l8 12" stroke="#222" strokeWidth="2.4" />
  </I>
);
const RoleI = () => (
  <I w={24} h={22}>
    <rect x="2" y="1" width="9" height="18" fill="#4a80d0" />
    <path d="M3 6h7M3 10h7M3 14h7" stroke="#a4c4ec" />
    <path d="M11 5h12l-6 5z" fill="#c8d4e4" />
    <path d="M13 9l7 11" stroke="#222" strokeWidth="2.2" />
    <path d="M1 20h10" stroke="#6a9a3a" strokeWidth="1.4" />
  </I>
);
const RobotI = () => (
  <I w={20} h={24}>
    <path d="M3 21h11M7 19l-2-8 7-6 6 2" fill="none" stroke="#666" strokeWidth="2.4" />
    <path d="M2 20h13v3H2z" fill="#d8b25a" />
    <path d="M14 4l5-3" stroke="#444" strokeWidth="1.4" />
  </I>
);
const FormI = () => (
  <I w={24} h={22}>
    <rect x="0.7" y="0.7" width="22.6" height="20.6" fill="#fff" stroke="#222" strokeWidth="1.3" />
    <rect x="3" y="4" width="5" height="4" fill="#8a90b8" />
    <rect x="15" y="4" width="6" height="4" fill="#8a90b8" />
    <path d="M9 6h5M9 15h5" stroke="#444" />
    <path d="M3 12h5v6H3z" fill="#fff" stroke="#333" />
    <rect x="15" y="12" width="6" height="6" fill="#888" />
  </I>
);

const Model = () => (
  <Scene viewBox="116 246 1539 733" preserveAspectRatio="none">
    <polygon points="672,497 1047,422 1024,466 686,532" fill="#fb665b" />
    <polygon points="686,532 1024,466 986,545 613,617 647,607" fill="#fe645a" />
    <polygon points="672,497 686,532 647,607 613,617" fill="#f5635a" />
    <polygon points="1047,422 1060,457 1002,578 986,545 1024,466" fill="#e85f55" />
    <polygon points="613,617 986,545 1002,578 629,652" fill="#8a3528" />
    <path d="M672 497L1047 422L1060 457L1002 578L629 652L613 617Z" fill="none" stroke="#e65a50" strokeWidth="1.6" />
    <path d="M672 497L686 532L1024 466M1047 422L1024 466M686 532L647 607" fill="none" stroke="#d9564c" strokeWidth="1" />
    <path d="M613 617L986 545L1002 578M613 617L629 652L1002 578" fill="none" stroke="#f0675c" strokeWidth="1.2" />
    <path d="M624 600L636 630L675 625L666 643L640 627" fill="none" stroke="#f3b7a6" strokeWidth="1.2" />
    <path d="M636 630L629 650M647 605L640 627" stroke="#f0a090" strokeWidth="1.6" />
    <path d="M653 612L666 643" stroke="#7a2a90" strokeWidth="1.2" />
    <path d="M612 615L604 592" stroke="#3a3aa8" strokeWidth="1" />
    <path d="M601 583l6 1-1 12-5-7z" fill="#1b2aa8" />
    <text x="592" y="581" fontSize="13" fontFamily="Liberation Sans" fill="#3a3ab8">Z</text>
    <path d="M688 641l7-2" stroke="#7a2aa0" strokeWidth="1.6" />
    <text x="704" y="640" fontSize="13" fontFamily="Liberation Sans" fill="#9a4ab0">X</text>
    <path d="M620 654h14M627 654v6" stroke="#1b2aa8" strokeWidth="1.6" />

    <circle cx="1011" cy="527" r="11.5" fill="none" stroke="#f2d8d0" strokeWidth="1" strokeDasharray="7 2" />
    <path d="M996 527h30M1011 512v30" stroke="#222" strokeWidth="3" />
    <path d="M996 527h30M1011 512v30" stroke="#fff" strokeWidth="1" />

    <path d="M172 884l18-7 13 24-12 15-8-4z" fill="#d2d4d2" stroke="#aeb0ae" />
    <path d="M172 884l16 8 15 9M188 892l-5 20" stroke="#b4b6b4" fill="none" />
    <path d="M176 916L167 889" stroke="#1c2f90" strokeWidth="2.4" />
    <path d="M165 882l4 12-6 1z" fill="#1c2f90" />
    <path d="M178 916L204 909" stroke="#a02c2c" strokeWidth="3" />
    <path d="M213 907l-11 -3 2 9z" fill="#a02c2c" />
    <circle cx="176" cy="918" r="3.6" fill="#c9cbca" stroke="#9a9a9a" />
    <text x="157" y="882" fontSize="13" fontFamily="Liberation Sans" fill="#4a5ab0">Z</text>
    <text x="214" y="913" fontSize="13" fontFamily="Liberation Sans" fill="#b05a5a">X</text>
  </Scene>
);

export default function App() {
  return (
    <>
      <GlobalStyle />
      <Defs />
      <Page>
        <Gutter>
          <GutterMark $mt={554}>杉</GutterMark>
          <GutterMark $mt={85}>3</GutterMark>
          <GutterMark $mt={88}>3</GutterMark>
        </Gutter>
        <Frame>
          <TitleBar>
            <NxMark $ml={3} $bottom={6}>NX</NxMark>
            <TitleItem $ml={19} $bottom={9}>
              <I w={19} h={15}>
                <path d="M1 0h17v15H1z" fill="#1d2f5c" />
                <rect x="7" y="8" width="5" height="7" fill="#d6dbe4" />
              </I>
            </TitleItem>
            <TitleItem $ml={23} $bottom={11}>
              <I w={16} h={13}>
                <path d="M3 2c8-3 12 2 8 9" fill="none" stroke="#2b3f70" strokeWidth="2" />
              </I>
            </TitleItem>
            <TitleItem $ml={30} $bottom={11}>
              <I w={18} h={13}>
                <path d="M2 1c8-2 12 2 9 10" fill="none" stroke="#c2c2c2" strokeWidth="2" />
              </I>
            </TitleItem>
            <TitleDivider $ml={10} />
            <TitleItem $ml={10} $bottom={8}>
              <I w={13} h={14}>
                <path d="M2 0l8 13M11 0L3 13" stroke="#bcbcbc" strokeWidth="1.4" />
              </I>
            </TitleItem>
            <TitleItem $ml={19} $bottom={7}>
              <I w={22} h={14}>
                <path d="M2 0h9v9H2zM8 4h12v10H8z" fill="#f2f2f2" stroke="#c8c8c8" />
              </I>
            </TitleItem>
            <TitleItem $ml={14} $bottom={7}>
              <I w={20} h={14}>
                <path d="M2 0h9v9H2zM7 4h12v10H7z" fill="#f2f2f2" stroke="#c8c8c8" />
              </I>
            </TitleItem>
            <TitleItem $ml={16} $bottom={6}>
              <I w={19} h={15}>
                <path d="M1 0h14l3 5v9H3z" fill="#fff" stroke="#bdbdbd" />
                <path d="M8 5l7 8" stroke="#888" strokeWidth="1.2" />
              </I>
            </TitleItem>
            <TitleDivider $ml={8} />
            <TitleItem $ml={9} $bottom={6}>
              <I w={18} h={15}>
                <path d="M1 14l7-8 4 3-6 5zM8 6l5-6 4 4-5 5z" fill="#e8b83a" stroke="#9a7420" strokeWidth="0.6" />
              </I>
            </TitleItem>
            <TitleDivider $ml={13} />
            <TitleItem $ml={18} $bottom={8}>
              <I w={20} h={15}>
                <path d="M1 8l8-8 10 7-7 8z" fill="#dcb878" stroke="#8a6a3a" strokeWidth="0.6" />
              </I>
            </TitleItem>
            <TitleDivider $ml={12} />
            <TitleItem $ml={8} $bottom={8}>
              <I w={18} h={12}>
                <path d="M5 0v6h11V0M1 2v9h10" fill="#fff" stroke="#333" strokeWidth="1.2" />
              </I>
            </TitleItem>
            <TitleItem $ml={9} $bottom={11}>切换窗口</TitleItem>
            <TitleItem $ml={10} $bottom={7}>
              <I w={23} h={15}>
                <rect x="0.7" y="0" width="21.6" height="14" fill="#dce4f8" stroke="#23235f" strokeWidth="1.4" />
              </I>
            </TitleItem>
            <TitleItem $ml={7} $bottom={11}>窗口</TitleItem>
            <TitleItem $ml={358} $bottom={11}>
              <TitlePill />
            </TitleItem>
            <TitleItem $ml={2} $bottom={11}>0.12.9 - 建模</TitleItem>
            <Siemens $ml={390} $bottom={10}>SIEMENS</Siemens>
            <WinBtn $ml={26} $kind="min" />
            <WinBtn $ml={15} $kind="max" />
          </TitleBar>

          <TabRow>
            <FileTab>文件(F)</FileTab>
            <RibbonTab $active>主页</RibbonTab>
            <RibbonTab>装配</RibbonTab>
            <RibbonTab>曲线</RibbonTab>
            <RibbonTab>曲面</RibbonTab>
            <RibbonTab>分析</RibbonTab>
            <RibbonTab>视图</RibbonTab>
            <RibbonTab>渲染</RibbonTab>
            <RibbonTab>工具</RibbonTab>
            <RibbonTab>应用模块</RibbonTab>
            <RibbonTab>内部</RibbonTab>
            <RowEnd>
              <SearchBox>
                查找命令
                <MagnifierI />
              </SearchBox>
              <Spacer $w={16} />
              <FitFrame />
              <Spacer $w={15} />
              <ChevronUp />
              <Spacer $w={21} />
              <HelpI />
            </RowEnd>
          </TabRow>

          <Ribbon>
            <RibbonGroup $w={543} $pad={14}>
              <GroupBody>
                <Command $w={56}>
                  <CommandIcon><Sketch /></CommandIcon>
                  <CommandLabel>在任务环境</CommandLabel>
                  <CommandLabel>中绘制草图</CommandLabel>
                </Command>
                <Command $w={72}>
                  <CommandIcon $low><Datum /></CommandIcon>
                  <CommandLabel>基准平面</CommandLabel>
                  <CommandArrow />
                </Command>
                <Command $w={46}>
                  <CommandIcon $low><BlockBig /></CommandIcon>
                  <CommandLabel>长方体</CommandLabel>
                  <CommandArrow />
                </Command>
                <Command $w={70}>
                  <CommandIcon><BlockBig hole /></CommandIcon>
                  <CommandLabel>孔</CommandLabel>
                </Command>
                <SideColumn $w={88} $pad={4}>
                  <SideRow><SideIcon><PatternI /></SideIcon>阵列特征</SideRow>
                  <SideRow><SideIcon><Unite /></SideIcon>合并<SideArrow /></SideRow>
                  <SideRow><SideIcon><Shell /></SideIcon>抽壳</SideRow>
                </SideColumn>
                <Command $w={50}>
                  <CommandIcon><Blend /></CommandIcon>
                  <CommandLabel>边倒圆</CommandLabel>
                  <CommandArrow />
                </Command>
                <SideColumn $w={85} $pad={10}>
                  <SideRow><SideIcon><Chamfer /></SideIcon>倒斜角</SideRow>
                  <SideRow><SideIcon><Trim /></SideIcon>修剪体</SideRow>
                  <SideRow><SideIcon><Draft /></SideIcon>拔模</SideRow>
                </SideColumn>
                <Command $w={53}>
                  <CommandIcon><MoreCard><MoreFeature /></MoreCard></CommandIcon>
                  <CommandLabel>更多</CommandLabel>
                  <CommandArrow />
                </Command>
              </GroupBody>
              <GroupFooter $pad={14}>
                <FooterLabel>特征</FooterLabel>
                <FooterArrow />
              </GroupFooter>
            </RibbonGroup>

            <RibbonGroup $w={221} $pad={1}>
              <GroupBody>
                <Command $w={72}>
                  <CommandIcon><MoveFace /></CommandIcon>
                  <CommandLabel>移动面</CommandLabel>
                </Command>
                <SideColumn $w={87} $pad={2}>
                  <SideRow><SideIcon><FaceSmall kind="offset" /></SideIcon>偏置区域</SideRow>
                  <SideRow><SideIcon><FaceSmall kind="replace" /></SideIcon>替换面</SideRow>
                  <SideRow><SideIcon><FaceSmall kind="del" /></SideIcon>删除面</SideRow>
                </SideColumn>
                <Command $w={54}>
                  <CommandIcon><MoreCard><SyncMore /></MoreCard></CommandIcon>
                  <CommandLabel>更多</CommandLabel>
                  <CommandArrow />
                </Command>
              </GroupBody>
              <GroupFooter $pad={1}>
                <FooterLabel>同步建模</FooterLabel>
                <FooterArrow />
              </GroupFooter>
            </RibbonGroup>

            <RibbonGroup $w={430} $pad={7}>
              <GroupBody>
                <Command $w={58}>
                  <CommandIcon><RemoveParam /></CommandIcon>
                  <CommandLabel>移除参数</CommandLabel>
                </Command>
                <Command $w={59}>
                  <CommandIcon $low><ScreenDist /></CommandIcon>
                  <CommandLabel>屏幕距离</CommandLabel>
                  <CommandArrow />
                </Command>
                <Command $w={58}>
                  <CommandIcon><Envelope /></CommandIcon>
                  <CommandLabel>包容体</CommandLabel>
                </Command>
                <Command $w={61}>
                  <CommandIcon><MoveObject /></CommandIcon>
                  <CommandLabel>移动对象</CommandLabel>
                </Command>
                <Command $w={62}>
                  <CommandIcon $low><EditSection /></CommandIcon>
                  <CommandLabel>编辑截面</CommandLabel>
                  <CommandArrow />
                </Command>
                <Command $w={58}>
                  <CommandIcon $low><LayerI /></CommandIcon>
                  <CommandLabel>图层类别</CommandLabel>
                  <CommandArrow />
                </Command>
                <Command $w={62}>
                  <CommandIcon $low><Wcs /></CommandIcon>
                  <CommandLabel>WCS 动态</CommandLabel>
                  <CommandArrow />
                </Command>
              </GroupBody>
            </RibbonGroup>

            <RibbonGroup $w={62}>
              <GroupBody>
                <Command $w={61}>
                  <CommandIcon><SurfaceI /></CommandIcon>
                  <CommandLabel>曲面</CommandLabel>
                  <CommandArrow />
                </Command>
              </GroupBody>
            </RibbonGroup>

            <RibbonGroup $w={75}>
              <GroupBody>
                <Command $w={74}>
                  <CommandIcon><MeasureI /></CommandIcon>
                  <CommandLabel>测量</CommandLabel>
                </Command>
              </GroupBody>
              <GroupFooter $pad={0}>
                <FooterLabel>分析</FooterLabel>
                <FooterArrow />
              </GroupFooter>
            </RibbonGroup>
          </Ribbon>

          <Toolbar>
            <MenuButton>
              <MenuI />
              菜单(M)
              <SideArrow />
            </MenuButton>
            <FilterSelect $w={133} $ml={15}>无选择过滤器<Arrow /></FilterSelect>
            <FilterSelect $w={139} $ml={12}>整个装配<Arrow /></FilterSelect>
            <Tool $w={8} />
            <Tool $w={34}><SnapGhost /></Tool>
            <Tool $w={36}><Ghost2 /></Tool>
            <Tool $w={32}><FilterI /></Tool>
            <Tool $w={14}><Arrow /></Tool>
            <Tool $w={36}><ArrowCross /></Tool>
            <Tool $w={32}><Ghost3 /></Tool>
            <Tool $w={44}><BoxCross /></Tool>
            <Tool $w={26}><RectSel /></Tool>
            <Tool $w={20}><Arrow /></Tool>
            <Tool $w={30}><Block3 /></Tool>
            <Tool $w={4} />
            <Tool $w={35} $on><BlueCube /></Tool>
            <Tool $w={36} $on><MoveArrows /></Tool>
            <Tool $w={35} $on><EndLine /></Tool>
            <Tool $w={3} />
            <Tool $w={34} $on><MidLine /></Tool>
            <Tool $w={38}><CurveI /></Tool>
            <Tool $w={35} $on><PolyPts /></Tool>
            <Tool $w={34} $on><Spline /></Tool>
            <Tool $w={38}><ArcCross /></Tool>
            <Tool $w={34} $on><CircleDot /></Tool>
            <Tool $w={39}><CircleRing /></Tool>
            <Tool $w={35} $on><Cross /></Tool>
            <Tool $w={1} />
            <Tool $w={35} $on><SlashPt /></Tool>
            <Tool $w={32}><FacePt /></Tool>
            <Tool $w={36}><Diamond /><GridI /></Tool>
            <ToolDivider />
            <Tool $w={9} />
            <Tool $w={34}><ZoomFrame /></Tool>
            <Tool $w={36}><PasteGhost /></Tool>
            <Tool $w={35}><Rotate /></Tool>
            <Tool $w={37}><Wedge /></Tool>
            <Tool $w={35}><DocsGhost /></Tool>
            <Tool $w={36}><FitAll /></Tool>
            <Tool $w={14}><Arrow /></Tool>
            <Tool $w={34}><Shade /></Tool>
            <Tool $w={12}><Arrow /></Tool>
            <Tool $w={30}><Cyl /><Mirror /></Tool>
            <Tool $w={12} $gap={18}><Arrow /><Arrow /></Tool>
            <Tool $w={7} />
            <ToolDivider />
          </Toolbar>

          <Main>
            <Sidebar>
              <SideSlot $h={26}><Gear /></SideSlot>
              <SideSlot $mt={19}><AsmNav /></SideSlot>
              <SideSlot $mt={6}><ConstraintNav /></SideSlot>
              <SideSlot $mt={7}><PartNav /></SideSlot>
              <SideSlot $mt={6}><Books /></SideSlot>
              <SideSlot $mt={14} $h={44} $active><InfoFeed /></SideSlot>
              <SideSlot $mt={14}><WebDoc /></SideSlot>
              <SideSlot $mt={18}><ClockI /></SideSlot>
              <SideSlot $mt={6}><RainbowI /></SideSlot>
              <SideSlot $mt={6}><RoleI /></SideSlot>
              <SideSlot $mt={5}><RobotI /></SideSlot>
              <SideSlot $mt={7}><FormI /></SideSlot>
            </Sidebar>
            <WorkArea>
              <DocStrip>
                <DocTab>
                  <LBlock />
                  <DocName>_model1.prt</DocName>
                  <DocPen />
                  <DocClose>×</DocClose>
                </DocTab>
              </DocStrip>
              <Viewport>
                <Model />
                <SnapTip>
                  <SmallCube s={22} />
                  块(2)
                </SnapTip>
              </Viewport>
            </WorkArea>
          </Main>

          <StatusBar>
            <StatusPrompt>选择对象并使用 MB3，或者双击某一对象</StatusPrompt>
            <StatusObject>块(2)</StatusObject>
            <StatusClock>上次：01:10:01 ▾</StatusClock>
            <StatusIcons>
              <I w={16} h={16}>
                <rect x="1" y="1" width="14" height="14" fill="#d8d8d8" />
                <path d="M4 4l8 8M12 4l-8 8" stroke="#b0b0b0" />
              </I>
              <FitFrame />
            </StatusIcons>
          </StatusBar>
        </Frame>
      </Page>
    </>
  );
}
